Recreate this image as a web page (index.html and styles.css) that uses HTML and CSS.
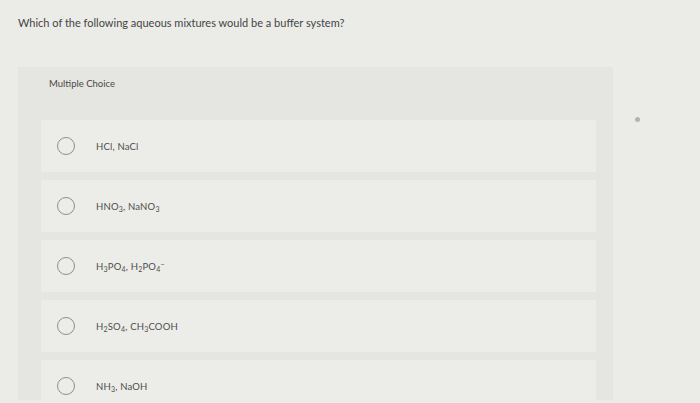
FILE: index.html
```html
<!DOCTYPE html>
<html>
<head>
<meta charset="utf-8">
<link rel="stylesheet" href="styles.css">
</head>
<body>
<div class="page">
  <p class="question">Which of the following aqueous mixtures would be a buffer system?</p>
  <div class="panel">
    <div class="panel-head">Multiple Choice</div>
    <div class="options">
      <div class="option"><span class="radio"></span><span class="label">HCl, NaCl</span></div>
      <div class="option"><span class="radio"></span><span class="label">HNO<sub>3</sub>, NaNO<sub>3</sub></span></div>
      <div class="option"><span class="radio"></span><span class="label">H<sub>3</sub>PO<sub>4</sub>, H<sub>2</sub>PO<sub>4</sub><sup>−</sup></span></div>
      <div class="option"><span class="radio"></span><span class="label">H<sub>2</sub>SO<sub>4</sub>, CH<sub>3</sub>COOH</span></div>
      <div class="option"><span class="radio"></span><span class="label">NH<sub>3</sub>, NaOH</span></div>
    </div>
  </div>
  <span class="dot"></span>
</div>
</body>
</html>
```
FILE: styles.css
```css
html, body {
  margin: 0;
  padding: 0;
}
body {
  background: #ebebe8;
  font-family: Lato, "Open Sans", "Liberation Sans", sans-serif;
  width: 700px;
  height: 403px;
  overflow: hidden;
}
.page {
  position: relative;
  padding: 15px 0 0 18px;
}
.question {
  margin: 0 0 36px 0;
  font-size: 11px;
  color: #444444;
  line-height: 16px;
}
.panel {
  width: 595px;
  height: 333px;
  background: #e5e5e1;
  box-sizing: border-box;
}
.panel-head {
  height: 53px;
  padding: 11px 0 0 31px;
  box-sizing: border-box;
  font-size: 9.5px;
  color: #484848;
}
.options {
  display: flex;
  flex-direction: column;
  gap: 8px;
  margin-left: 23px;
  width: 555px;
}
.option {
  height: 52px;
  background: #ecece9;
  display: flex;
  align-items: center;
  padding-left: 16px;
}
.radio {
  width: 16px;
  height: 16px;
  border: 1.5px solid #8e8e8e;
  border-radius: 50%;
  flex: none;
}
.label {
  margin-left: 21px;
  font-size: 9.5px;
  color: #4c4c4c;
  letter-spacing: 0.2px;
}
.label sub {
  font-size: 7px;
  vertical-align: -2px;
  line-height: 0;
}
.label sup {
  font-size: 7px;
  vertical-align: 3px;
  line-height: 0;
}
.dot {
  position: absolute;
  left: 635px;
  top: 117px;
  width: 5px;
  height: 5px;
  border-radius: 50%;
  background: #b4b4b2;
}
```
